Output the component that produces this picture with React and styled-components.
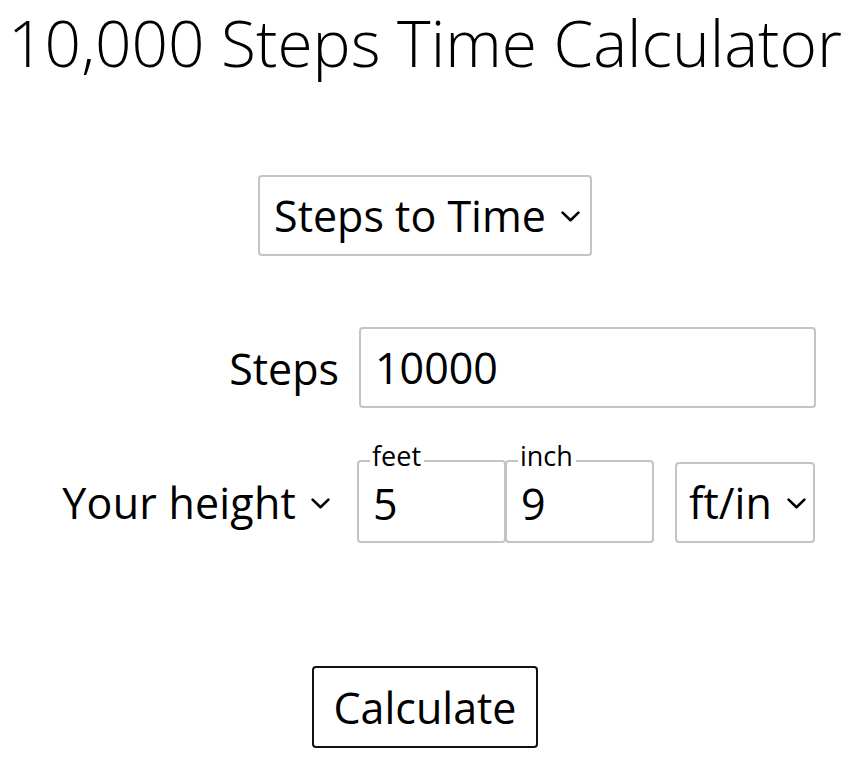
import React, { useState } from 'react';
import styled, { createGlobalStyle } from 'styled-components';

const GlobalStyle = createGlobalStyle`
body{
    margin: 0;
    background: #fff;
    color: #000;
    font-family: "Open Sans", "Noto Sans", sans-serif;
}
`

function Chevron() {
    return (
        <ChevronIcon width="19" height="11" viewBox="0 0 19 11" fill="none">
            <path d="M1.6 1.6 L9.5 9.2 L17.4 1.6" stroke="#000" strokeWidth="2.6" strokeLinecap="round" strokeLinejoin="round" />
        </ChevronIcon>
    )
}

function App() {
    const [steps, setSteps] = useState('10000');
    const [feet, setFeet] = useState('5');
    const [inch, setInch] = useState('9');

    return (
        <Page>
            <GlobalStyle />
            <Title>10,000 Steps Time Calculator</Title>

            <ModeSelect>
                Steps to Time
                <Chevron />
            </ModeSelect>

            <Form>
                <Label>Steps</Label>
                <TextInput value={steps} onChange={e => setSteps(e.target.value)} />

                <HeightSelect>
                    Your height
                    <Chevron />
                </HeightSelect>
                <HeightGroup>
                    <Field>
                        <Legend>feet</Legend>
                        <FieldInput value={feet} onChange={e => setFeet(e.target.value)} />
                    </Field>
                    <Field joined>
                        <Legend>inch</Legend>
                        <FieldInput value={inch} onChange={e => setInch(e.target.value)} />
                    </Field>
                    <UnitSelect>
                        ft/in
                        <Chevron />
                    </UnitSelect>
                </HeightGroup>
            </Form>

            <Calculate>Calculate</Calculate>
        </Page>
    )
}

export default App

const Page = styled.div`
width: 850px;
display: flex;
flex-direction: column;
align-items: center;
`

const Title = styled.h1`
margin: 11px 0 0;
font-size: 64px;
line-height: 64px;
font-weight: 300;
white-space: nowrap;
`

const ChevronIcon = styled.svg`
flex-shrink: 0;
margin-top: 2px;
`

const SelectBase = styled.button`
display: flex;
align-items: center;
gap: 15px;
height: 81px;
box-sizing: border-box;
background: #fff;
font-family: inherit;
font-size: 43px;
color: #000;
border: 2px solid #c4c4c4;
border-radius: 4px;
padding: 0 9px 0 12px;
cursor: pointer;
`

const ModeSelect = styled(SelectBase)`
margin-top: 100px;
padding: 0 10px 0 14px;
`

const Form = styled.div`
align-self: stretch;
display: grid;
grid-template-columns: 1fr 459px;
column-gap: 18px;
row-gap: 34px;
padding-right: 34px;
margin-top: 71px;
align-items: end;
`

const Label = styled.div`
justify-self: end;
height: 81px;
line-height: 83px;
font-size: 43px;
`

const TextInput = styled.input`
justify-self: end;
width: 457px;
height: 81px;
box-sizing: border-box;
border: 2px solid #c4c4c4;
border-radius: 4px;
padding: 0 14px;
font-family: inherit;
font-size: 43px;
color: #000;
outline: none;
`

const HeightSelect = styled(SelectBase)`
justify-self: end;
border-color: transparent;
padding: 0 7px 0 0;
gap: 15px;
letter-spacing: 0.2px;
`

const HeightGroup = styled.div`
display: flex;
align-items: flex-end;
`

const Field = styled.fieldset`
width: 149px;
box-sizing: border-box;
margin: 0 0 0 ${props => props.joined ? '-1px' : '0'};
padding: 0 11px;
border: 2px solid #c4c4c4;
border-radius: 4px;
min-width: 0;
`

const Legend = styled.legend`
padding: 0 3px 10px 2px;
font-size: 27px;
line-height: 27px;
`

const FieldInput = styled.input`
display: block;
width: 100%;
height: 62px;
box-sizing: border-box;
border: none;
padding: 0 0 14px 3px;
font-family: inherit;
font-size: 43px;
color: #000;
outline: none;
background: transparent;
`

const UnitSelect = styled(SelectBase)`
margin-left: 21px;
width: 140px;
justify-content: space-between;
`

const Calculate = styled.button`
margin-top: 123px;
height: 82px;
box-sizing: border-box;
padding: 0 19px;
background: #fff;
border: 2px solid #111;
border-radius: 4px;
font-family: inherit;
font-size: 43px;
color: #000;
cursor: pointer;
`
